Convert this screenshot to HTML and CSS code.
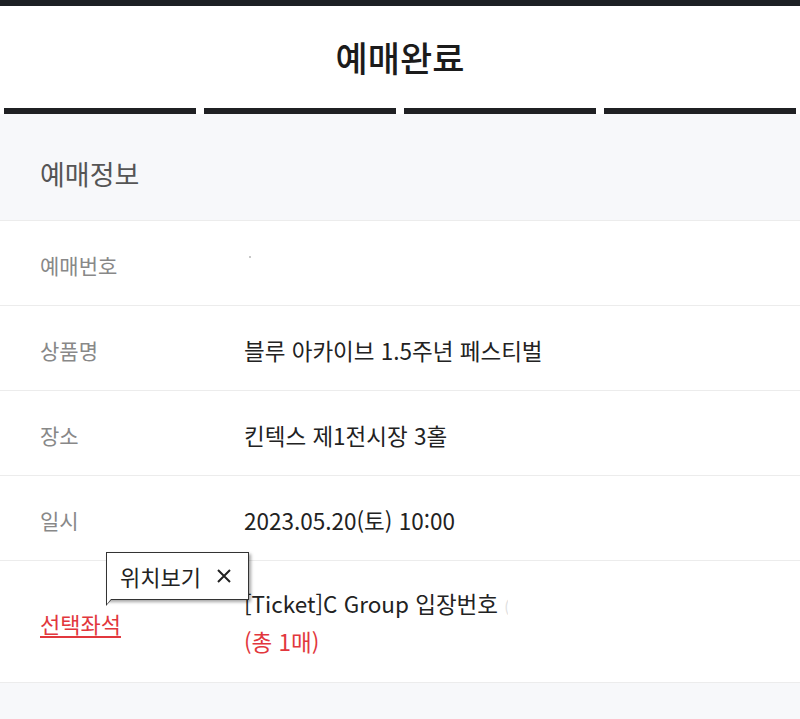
FILE: index.html
```html
<!DOCTYPE html>
<html lang="ko">
<head>
<meta charset="utf-8">
<title>예매완료</title>
<link rel="stylesheet" href="styles.css">
</head>
<body>
<div class="topbar"></div>
<header class="header">
  <h1 class="title">예매완료</h1>
</header>
<div class="steps">
  <span class="step"></span>
  <span class="step"></span>
  <span class="step"></span>
  <span class="step"></span>
</div>
<section class="info">
  <h2 class="section-title">예매정보</h2>
  <div class="rows">
    <div class="row">
      <div class="label">예매번호</div>
      <div class="value"><span class="dot"></span></div>
    </div>
    <div class="row">
      <div class="label">상품명</div>
      <div class="value">블루 아카이브 1.5주년 페스티벌</div>
    </div>
    <div class="row">
      <div class="label">장소</div>
      <div class="value">킨텍스 제1전시장 3홀</div>
    </div>
    <div class="row">
      <div class="label">일시</div>
      <div class="value">2023.05.20(토) 10:00</div>
    </div>
    <div class="row row-seat">
      <div class="label label-seat">
        <a class="seat-link" href="#">선택좌석</a>
        <div class="tooltip">
          <span class="tooltip-text">위치보기</span>
          <svg class="tooltip-close" width="16" height="16" viewBox="0 0 16 16" aria-label="닫기"><path d="M2 2 L14 14 M14 2 L2 14" stroke="#222" stroke-width="2" fill="none"/></svg>
        </div>
      </div>
      <div class="value value-seat">
        <div class="seat-line">[Ticket]C Group 입장번호 <span class="faint">(</span></div>
        <div class="seat-count">(총 1매)</div>
      </div>
    </div>
  </div>
</section>
<div class="footer-space"></div>
</body>
</html>
```

FILE: styles.css
```css
* { box-sizing: border-box; }
html, body {
  margin: 0;
  padding: 0;
  background: #f7f8fa;
  font-family: "Noto Sans CJK KR", "Noto Sans", sans-serif;
  color: #222;
}
.topbar {
  height: 6px;
  background: #1d2024;
}
.header {
  background: #fff;
  height: 102px;
  display: flex;
  align-items: center;
  justify-content: center;
}
.title {
  margin: 0;
  font-size: 35px;
  font-weight: 500;
  color: #1b1b1b;
  letter-spacing: 0;
  padding-bottom: 2px;
}
.steps {
  display: flex;
  gap: 8px;
  padding: 0 4px;
  background: #fff;
}
.step {
  flex: 1;
  height: 6px;
  background: #1f2023;
}
.info {
  background: #f7f8fa;
}
.section-title {
  margin: 0;
  height: 107px;
  display: flex;
  align-items: center;
  padding-left: 40px;
  padding-top: 12px;
  font-size: 27px;
  font-weight: 400;
  color: #555;
  border-bottom: 1px solid #ececec;
}
.rows {
  background: #fff;
}
.row {
  display: flex;
  align-items: center;
  height: 85px;
  border-bottom: 1px solid #ececec;
  padding-top: 3px;
}
.label {
  width: 244px;
  padding-left: 40px;
  font-size: 21px;
  color: #888;
  flex-shrink: 0;
}
.value {
  font-size: 22.5px;
  color: #222;
  flex: 1;
  min-width: 0;
}
.dot {
  display: block;
  width: 2px;
  height: 2px;
  background: #c8c8c8;
  margin-left: 5px;
  transform: translateY(-8px);
}
.row-seat {
  height: 122px;
  padding-top: 2px;
}
.label-seat {
  position: relative;
}
.seat-link {
  color: #e2373d;
  text-decoration: underline;
  text-decoration-thickness: 2px;
  text-underline-offset: 3px;
  font-size: 22px;
}
.tooltip {
  position: absolute;
  left: 106px;
  top: -55px;
  width: 143px;
  height: 48px;
  background: #fff;
  border: 1px solid #333;
  box-shadow: 2px 2px 3px rgba(0,0,0,0.35);
  display: flex;
  align-items: center;
  padding-left: 13px;
  gap: 15px;
  color: #222;
  font-size: 22px;
}
.tooltip::after {
  content: "";
  position: absolute;
  left: -1px;
  bottom: -7px;
  width: 0;
  height: 0;
  border-top: 7px solid #333;
  border-right: 6px solid transparent;
}
.tooltip::before {
  content: "";
  position: absolute;
  left: 0;
  bottom: -5px;
  width: 0;
  height: 0;
  border-top: 5px solid #fff;
  border-right: 4px solid transparent;
  z-index: 1;
}
.tooltip-close {
  display: block;
  flex-shrink: 0;
}
.value-seat {
  line-height: 35px;
  margin-top: 0;
}
.seat-line {
  white-space: nowrap;
  overflow: hidden;
}
.faint {
  color: #e0e0e0;
  font-size: 15px;
  display: inline-block;
  width: 4px;
  overflow: hidden;
  vertical-align: middle;
}
.seat-count {
  color: #e2373d;
}
.footer-space {
  height: 40px;
  background: #f7f8fa;
}
```
